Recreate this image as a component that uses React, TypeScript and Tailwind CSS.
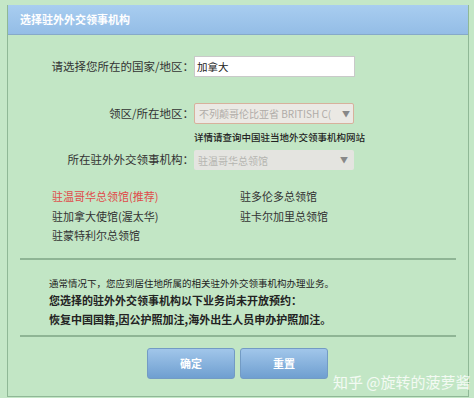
const cjk = { fontFamily: '"Noto Sans CJK SC", "Noto Sans", sans-serif' };

function Arrow() {
  return <span className="text-[8px] text-[#888] leading-none">▼</span>;
}

export default function App() {
  return (
    <div style={cjk} className="relative w-[474px] h-[398px] overflow-hidden bg-[#c4e7c7] pl-[7px] pt-[5px]">
      <div className="w-[462px] h-[392px] border-x border-b border-[#8fb896] bg-[#c2e6c5]">
        {/* header */}
        <div className="h-[30px] flex items-center pl-[12px] bg-gradient-to-b from-[#a8cdf0] to-[#94bde6] border-b border-[#86a9c9] text-white text-[11px] font-bold">
          选择驻外外交领事机构
        </div>

        {/* form */}
        <div className="grid grid-cols-[186px_1fr] items-center text-[11.5px] text-[#333] mt-[21px]">
          <div className="text-right">请选择您所在的国家/地区：</div>
          <div className="h-[21px] w-[161px] bg-white border border-[#c9c9c9] flex items-center pl-[2px] text-[10.5px] text-[#222]">加拿大</div>

          <div className="text-right mt-[26px]">领区/所在地区：</div>
          <div className="mt-[26px] h-[21px] w-[160px] bg-[#ebe9e4] border border-[#d7b19c] rounded-[2px] flex items-center justify-between pl-[4px] pr-[3px] text-[10px] text-[#b0aca8] overflow-hidden whitespace-nowrap">
            <span className="overflow-hidden">不列颠哥伦比亚省 BRITISH C(</span>
            <Arrow />
          </div>

          <div />
          <div className="text-[9.5px] font-medium text-[#222] mt-[6px] leading-[14px]">详情请查询中国驻当地外交领事机构网站</div>

          <div className="text-right mt-[6px]">所在驻外外交领事机构：</div>
          <div className="mt-[6px] h-[20px] w-[160px] bg-[#e4e4e0] rounded-[2px] flex items-center justify-between pl-[4px] pr-[6px] text-[10px] text-[#b5b5b0]">
            <span>驻温哥华总领馆</span>
            <Arrow />
          </div>
        </div>

        {/* consulates */}
        <div className="grid grid-cols-[188px_1fr] pl-[44px] mt-[17px] text-[11px] leading-[19.5px] text-[#333]">
          <div className="text-[#e04a4a]">驻温哥华总领馆(推荐)</div>
          <div>驻多伦多总领馆</div>
          <div>驻加拿大使馆(渥太华)</div>
          <div>驻卡尔加里总领馆</div>
          <div>驻蒙特利尔总领馆</div>
        </div>

        <div className="mx-[12px] mt-[12px] h-[2px] bg-[#8fb595]" />

        {/* notice */}
        <div className="pl-[41px] pt-[16px] text-[#222]">
          <div className="text-[9.5px] leading-[14px]">通常情况下，您应到居住地所属的相关驻外外交领事机构办理业务。</div>
          <div className="text-[11px] font-bold leading-[19px] mt-[1px]">您选择的驻外外交领事机构以下业务尚未开放预约：</div>
          <div className="text-[11px] font-bold leading-[19px]">恢复中国国籍,因公护照加注,海外出生人员申办护照加注。</div>
        </div>

        <div className="mx-[12px] mt-[6px] h-[2px] bg-[#8fb595]" />

        {/* buttons */}
        <div className="flex gap-[5px] pl-[139px] mt-[11px]">
          <button className="w-[88px] h-[31px] rounded-[3px] border border-[#739bc4] bg-gradient-to-b from-[#a1c6ea] to-[#6f9fd0] text-white text-[11px] font-bold">确定</button>
          <button className="w-[88px] h-[31px] rounded-[3px] border border-[#739bc4] bg-gradient-to-b from-[#a1c6ea] to-[#6f9fd0] text-white text-[11px] font-bold">重置</button>
        </div>
      </div>

      {/* watermark */}
      <div className="absolute left-[333px] top-[371px] text-[15px] text-white/80 whitespace-nowrap">知乎 @旋转的菠萝酱</div>
    </div>
  );
}
